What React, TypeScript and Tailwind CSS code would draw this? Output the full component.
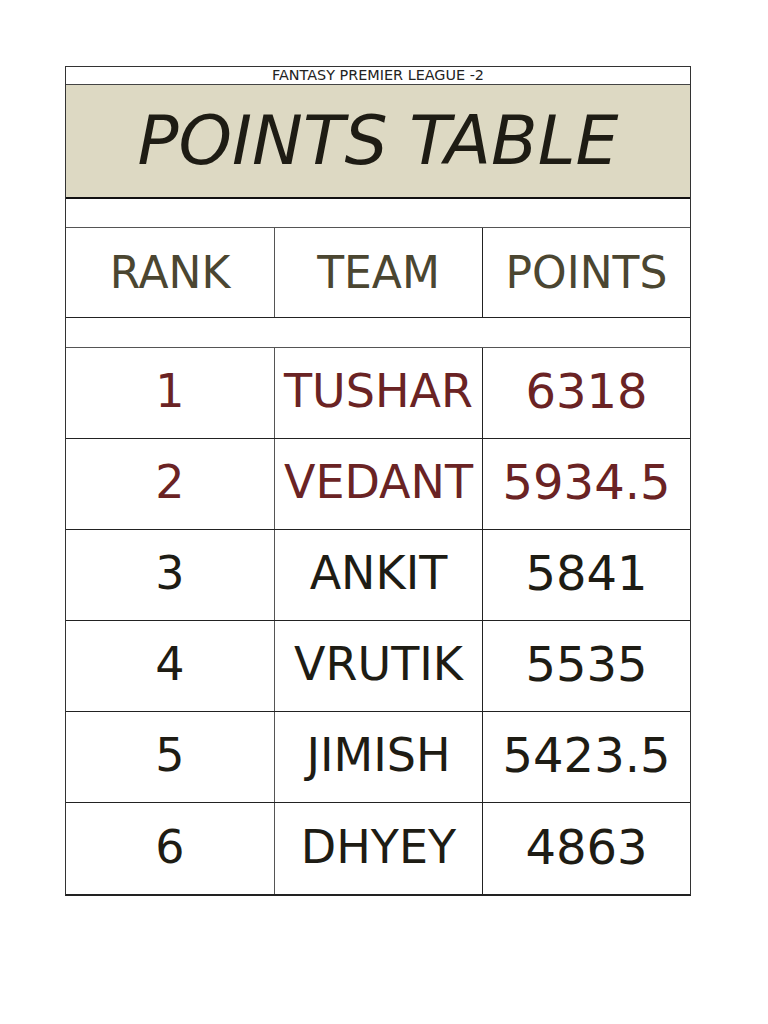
const ROWS = [
  { rank: '1', team: 'TUSHAR', points: '6318', top: true },
  { rank: '2', team: 'VEDANT', points: '5934.5', top: true },
  { rank: '3', team: 'ANKIT', points: '5841', top: false },
  { rank: '4', team: 'VRUTIK', points: '5535', top: false },
  { rank: '5', team: 'JIMISH', points: '5423.5', top: false },
  { rank: '6', team: 'DHYEY', points: '4863', top: false },
];

export default function App() {
  return (
    <div className="min-h-[1024px] w-[768px] bg-white pt-[66px] pl-[65px] font-['DejaVu_Sans',sans-serif]">
      <div className="w-[626px] border border-b-2 border-[#333] border-b-[#222]">
        {/* Sheet name */}
        <div className="flex h-[18px] items-center justify-center border-b border-[#444] text-[14.4px] leading-none text-[#222]">
          FANTASY PREMIER LEAGUE -2
        </div>

        {/* Title band */}
        <div className="flex h-[114px] items-center justify-center border-b-2 border-[#111] bg-[#ddd9c3] text-[68px] italic leading-none text-[#1e1c14]">
          POINTS TABLE
        </div>

        <div className="h-[29px] border-b border-[#555]" />

        {/* Header */}
        <div className="flex h-[90px] border-b border-[#222] text-[44px] leading-none text-[#4b4631]">
          <div className="flex w-[209px] items-center justify-center border-r border-[#555]">RANK</div>
          <div className="flex w-[208px] items-center justify-center border-r border-[#222]">TEAM</div>
          <div className="flex w-[207px] items-center justify-center">POINTS</div>
        </div>

        <div className="h-[30px] border-b border-[#555]" />

        {/* Rows */}
        {ROWS.map((row, i) => (
          <div
            key={row.rank}
            className={`flex h-[91px] leading-none ${i < ROWS.length - 1 ? 'border-b border-[#222]' : ''} ${row.top ? 'text-[#6a2324]' : 'text-[#1e1c14]'}`}
          >
            <div className="flex w-[209px] items-center justify-center border-r border-[#555] pb-[4px] text-[46px]">{row.rank}</div>
            <div className="flex w-[208px] items-center justify-center border-r border-[#222] pb-[4px] text-[46px]">{row.team}</div>
            <div className="flex w-[207px] items-center justify-center pb-[4px] text-[48px]">{row.points}</div>
          </div>
        ))}
      </div>
    </div>
  );
}
